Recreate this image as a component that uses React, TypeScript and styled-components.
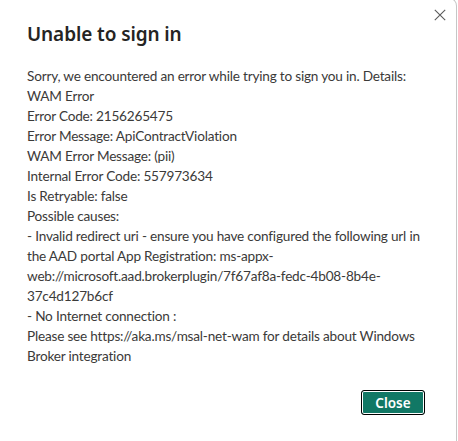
import React from "react";
import styled, { createGlobalStyle } from "styled-components";

const Global = createGlobalStyle`
  html, body { margin: 0; padding: 0; background: #ffffff; }
  body { font-family: "Segoe UI", Lato, "Noto Sans", sans-serif; overflow: hidden; }
`;

const Dialog = styled.div`
  position: relative;
  box-sizing: border-box;
  width: 457px;
  height: 450px;
  margin-top: -3px;
  padding: 22px 0 0 27px;
  background: #ffffff;
  border-right: 1px solid #c6c6c6;
  border-top: 1px solid #c6c6c6;
  border-top-right-radius: 9px;
  display: flex;
  flex-direction: column;
`;

const CloseIcon = styled.button`
  position: absolute;
  top: 10px;
  right: 10px;
  width: 13px;
  height: 13px;
  padding: 0;
  border: none;
  background: transparent;
  display: flex;
  align-items: center;
  justify-content: center;
  cursor: pointer;
`;

const Title = styled.h1`
  margin: 0;
  font-family: "Segoe UI", "Noto Sans", sans-serif;
  font-size: 19px;
  letter-spacing: -0.1px;
  line-height: 28px;
  font-weight: 600;
  color: #252423;
`;

const Body = styled.div`
  margin-top: 18px;
  display: flex;
  flex-direction: column;
  color: #3b3a39;
  font-size: 13.6px;
  letter-spacing: -0.2px;
  line-height: 20px;
`;

const Line = styled.div`
  white-space: nowrap;
`;

const Footer = styled.div`
  margin-top: 24px;
  padding-right: 31px;
  display: flex;
  justify-content: flex-end;
`;

const PrimaryButton = styled.button`
  box-sizing: border-box;
  width: 64px;
  height: 25px;
  border: 1px solid #000000;
  border-radius: 3px;
  box-shadow: inset 0 0 0 1px #ffffff;
  background: #117865;
  color: #ffffff;
  font-family: "Segoe UI", "Noto Sans", sans-serif;
  font-size: 13.5px;
  font-weight: 600;
  line-height: 20px;
  padding: 0;
  cursor: pointer;
`;

const lines = [
  "Sorry, we encountered an error while trying to sign you in. Details:",
  "WAM Error",
  "Error Code: 2156265475",
  "Error Message: ApiContractViolation",
  "WAM Error Message: (pii)",
  "Internal Error Code: 557973634",
  "Is Retryable: false",
  "Possible causes:",
  "- Invalid redirect uri - ensure you have configured the following url in",
  "the AAD portal App Registration: ms-appx-",
  "web://microsoft.aad.brokerplugin/7f67af8a-fedc-4b08-8b4e-",
  "37c4d127b6cf",
  "- No Internet connection :",
  "Please see https://aka.ms/msal-net-wam for details about Windows",
  "Broker integration",
];

export default function App() {
  return (
    <>
      <Global />
      <Dialog>
        <CloseIcon aria-label="Close dialog">
          <svg width="12" height="12" viewBox="0 0 12 12">
            <path d="M0.8 0.8 L11.2 11.2 M11.2 0.8 L0.8 11.2" stroke="#5a5a5a" strokeWidth="1.1" fill="none" />
          </svg>
        </CloseIcon>
        <Title>Unable to sign in</Title>
        <Body>
          {lines.map((l, i) => (
            <Line key={i}>{l}</Line>
          ))}
        </Body>
        <Footer>
          <PrimaryButton>Close</PrimaryButton>
        </Footer>
      </Dialog>
    </>
  );
}
